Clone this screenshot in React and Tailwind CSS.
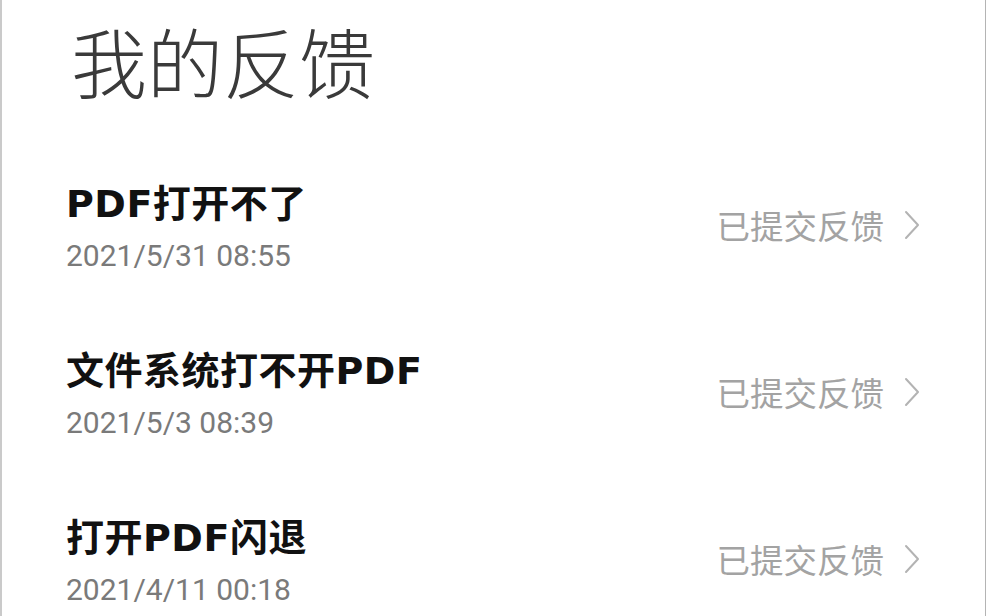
import React from "react";

const items = [
  { title: ["PDF", "打开不了"], time: "2021/5/31 08:55" },
  { title: ["文件系统打不开", "PDF"], time: "2021/5/3 08:39" },
  { title: ["打开", "PDF", "闪退"], time: "2021/4/11 00:18" },
];

// Latin runs inside the bold titles use a wider sans face than the CJK text
function TitleText({ parts }) {
  return parts.map((p, i) =>
    /^[A-Za-z]+$/.test(p) ? (
      <span key={i} style={{ fontFamily: '"DejaVu Sans", sans-serif' }}>
        {p}
      </span>
    ) : (
      <span key={i}>{p}</span>
    )
  );
}

function Chevron() {
  return (
    <svg width="18" height="32" viewBox="0 0 18 32" fill="none" className="ml-[19px]">
      <path d="M3 3 L15 16 L3 29" stroke="#b3b3b3" strokeWidth="2" strokeLinecap="round" strokeLinejoin="round" />
    </svg>
  );
}

function FeedbackRow({ title, time }) {
  return (
    <div className="flex h-[167px] items-center justify-between pl-[64px] pr-[64px]">
      <div className="flex flex-col pt-[4px]">
        <div
          className="text-[38px] font-semibold leading-[44px] tracking-[0.5px] text-[#111]"
          style={{ fontFamily: '"Noto Sans CJK SC", "Noto Sans", sans-serif' }}
        >
          <TitleText parts={title} />
        </div>
        <div
          className="mt-[12px] text-[30px] leading-[36px] text-[#7a7a7a]"
          style={{ fontFamily: 'Roboto, "Noto Sans", sans-serif' }}
        >
          {time}
        </div>
      </div>
      <div className="flex items-center">
        <span
          className="text-[33.5px] leading-[40px] text-[#a3a3a3]"
          style={{ fontFamily: '"Noto Sans CJK SC", sans-serif' }}
        >
          已提交反馈
        </span>
        <Chevron />
      </div>
    </div>
  );
}

export default function App() {
  return (
    <div className="h-[616px] w-[986px] overflow-hidden border-l-2 border-r border-l-[#cacaca] border-r-[#b4b4b4] bg-white">
      <div className="flex h-[141px] items-start pl-[69px] pt-[20px]">
        <h1
          className="text-[76px] font-light leading-[80px] text-[#3a3a3a]"
          style={{ fontFamily: '"Noto Sans CJK SC", sans-serif' }}
        >
          我的反馈
        </h1>
      </div>
      {items.map((it) => (
        <FeedbackRow key={it.time} title={it.title} time={it.time} />
      ))}
    </div>
  );
}
